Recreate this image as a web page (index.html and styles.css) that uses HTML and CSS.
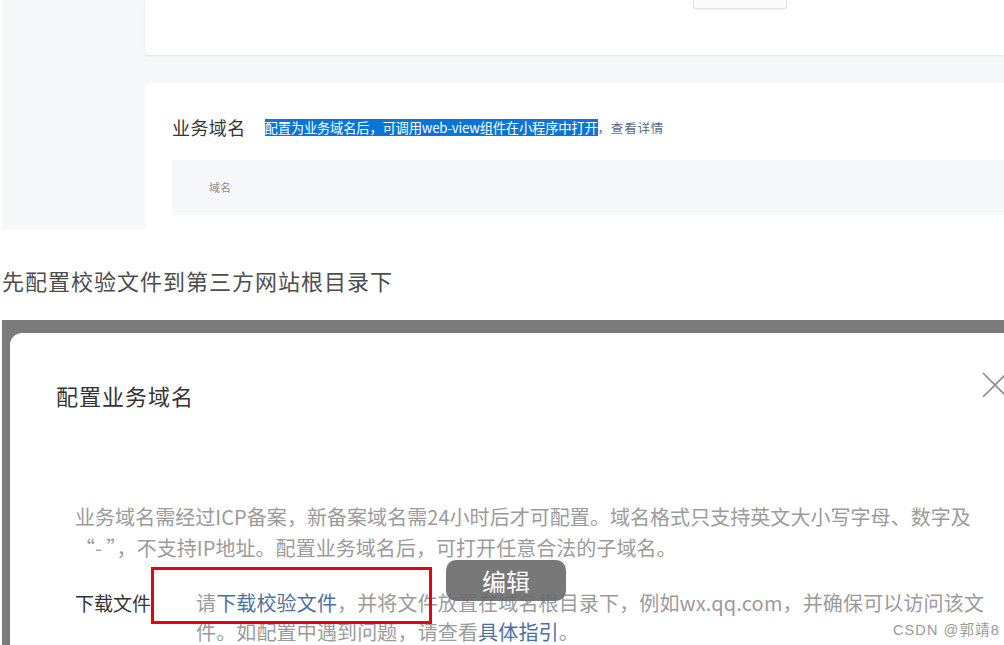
FILE: index.html
```html
<!DOCTYPE html>
<html lang="zh-CN">
<head>
<meta charset="utf-8">
<title>配置业务域名</title>
<link rel="stylesheet" href="styles.css">
</head>
<body>
<div class="shot1">
  <div class="side"></div>
  <div class="main">
    <div class="card1"><div class="btn"></div></div>
    <div class="card2">
      <div class="head">
        <span class="head-title">业务域名</span>
        <span class="sel">配置为业务域名后，可调用web-view组件在小程序中打开</span><span class="more">，查看详情</span>
      </div>
      <div class="table-head">域名</div>
    </div>
  </div>
</div>
<div class="caption">先配置校验文件到第三方网站根目录下</div>
<div class="shot2">
  <div class="modal">
    <div class="m-title">配置业务域名</div>
    <svg class="close" width="26" height="26" viewBox="0 0 26 26"><path d="M1 1L25 25M25 1L1 25" stroke="#8c8c8c" stroke-width="1.6" fill="none"/></svg>
    <p class="desc">业务域名需经过ICP备案，新备案域名需24小时后才可配置。域名格式只支持英文大小写字母、数字及<br>“- ”，不支持IP地址。配置业务域名后，可打开任意合法的子域名。</p>
    <div class="dl-row">
      <div class="dl-label">下载文件</div>
      <div class="dl-text">请<span class="link">下载校验文件</span>，并将文件放置在域名根目录下，例如wx.qq.com，并确保可以访问该文<br>件。如配置中遇到问题，请查看<span class="link">具体指引</span>。</div>
    </div>
    <div class="redbox"></div>
    <div class="tip">编辑</div>
    <div class="mark">CSDN @郭靖8</div>
  </div>
</div>
</body>
</html>
```
FILE: styles.css
```css
html, body {
  margin: 0;
  padding: 0;
  background: #fff;
  width: 1004px;
  height: 645px;
  overflow: hidden;
  font-family: "Noto Sans CJK SC", "Microsoft YaHei", sans-serif;
}

.shot1 {
  display: flex;
  height: 230px;
  margin-left: 2px;
  background: #f6f7f9;
}
.side { width: 143px; flex: none; }
.main {
  flex: 1;
  display: flex;
  flex-direction: column;
  gap: 28px;
}
.card1 {
  height: 55px;
  flex: none;
  background: #fff;
  border-radius: 0 0 0 3px;
  box-shadow: 0 1px 2px rgba(0,0,0,0.09);
  display: flex;
  align-items: flex-start;
}
.btn {
  margin-left: 548px;
  width: 92px;
  height: 8px;
  border: 1px solid #e3e3e3;
  border-top: none;
  border-radius: 0 0 3px 3px;
  box-shadow: 0 1px 2px rgba(0,0,0,0.06);
  background: #fafafa;
}
.card2 {
  flex: 1;
  background: #fff;
  border-radius: 3px 0 0 0;
  padding-left: 27px;
  display: flex;
  flex-direction: column;
}
.head {
  margin-top: 35px;
  height: 18px;
  display: flex;
  align-items: center;
  white-space: nowrap;
}
.head-title {
  font-size: 18px;
  color: #353535;
  margin-right: 19px;
  line-height: 18px;
  letter-spacing: 0.4px;
}
.sel {
  background: #0b74d8;
  color: #fff;
  font-size: 13.3px;
  line-height: 17px;
  height: 17px;
  letter-spacing: -0.2px;
}
.more {
  color: #5a6a8c;
  font-size: 12.5px;
  line-height: 17px;
  letter-spacing: 0.8px;
}
.table-head {
  margin-top: 24px;
  height: 55px;
  line-height: 55px;
  background: #f6f7f9;
  padding-left: 37px;
  font-size: 11px;
  color: #8a8a8a;
}

.caption {
  height: 90px;
  box-sizing: border-box;
  padding: 38px 0 0 2px;
  font-size: 22px;
  line-height: 24px;
  letter-spacing: 1px;
  color: #4d4d4d;
  white-space: nowrap;
}

.shot2 {
  margin-left: 2px;
  height: 325px;
  box-sizing: border-box;
  padding: 13px 0 0 8px;
  background: #7b7b7b;
}
.modal {
  position: relative;
  height: 312px;
  background: #fff;
  border-radius: 12px 0 0 0;
  padding: 47px 0 0 46px;
  box-sizing: border-box;
  overflow: hidden;
}
.m-title {
  font-size: 22px;
  line-height: 30px;
  color: #333;
  letter-spacing: 1px;
}
.close {
  position: absolute;
  left: 972px;
  top: 39px;
}
.desc {
  margin: 91px 0 0 19px;
  font-size: 20px;
  line-height: 31px;
  color: #9b9b9b;
  white-space: nowrap;
  letter-spacing: 0.05px;
}
.dl-row {
  display: flex;
  margin: 25px 0 0 19px;
  font-size: 20px;
  line-height: 29px;
  white-space: nowrap;
}
.dl-label {
  width: 121px;
  flex: none;
  color: #333;
  font-size: 19px;
}
.dl-text {
  color: #9b9b9b;
  letter-spacing: 0.15px;
}
.link { color: #4f6f9f; }

.redbox {
  position: absolute;
  left: 141px;
  top: 234px;
  width: 281px;
  height: 57px;
  box-sizing: border-box;
  border: 3px solid #e60018;
}
.tip {
  position: absolute;
  left: 436px;
  top: 227px;
  width: 120px;
  height: 41px;
  border-radius: 10px;
  background: rgba(105,105,105,0.9);
  color: #fff;
  font-size: 24px;
  line-height: 41px;
  text-align: center;
}
.mark {
  position: absolute;
  left: 883px;
  top: 289px;
  font-size: 14.5px;
  line-height: 16px;
  letter-spacing: 1.1px;
  color: #9a9a9a;
  font-family: "Liberation Sans", "Noto Sans CJK SC", sans-serif;
}
```
